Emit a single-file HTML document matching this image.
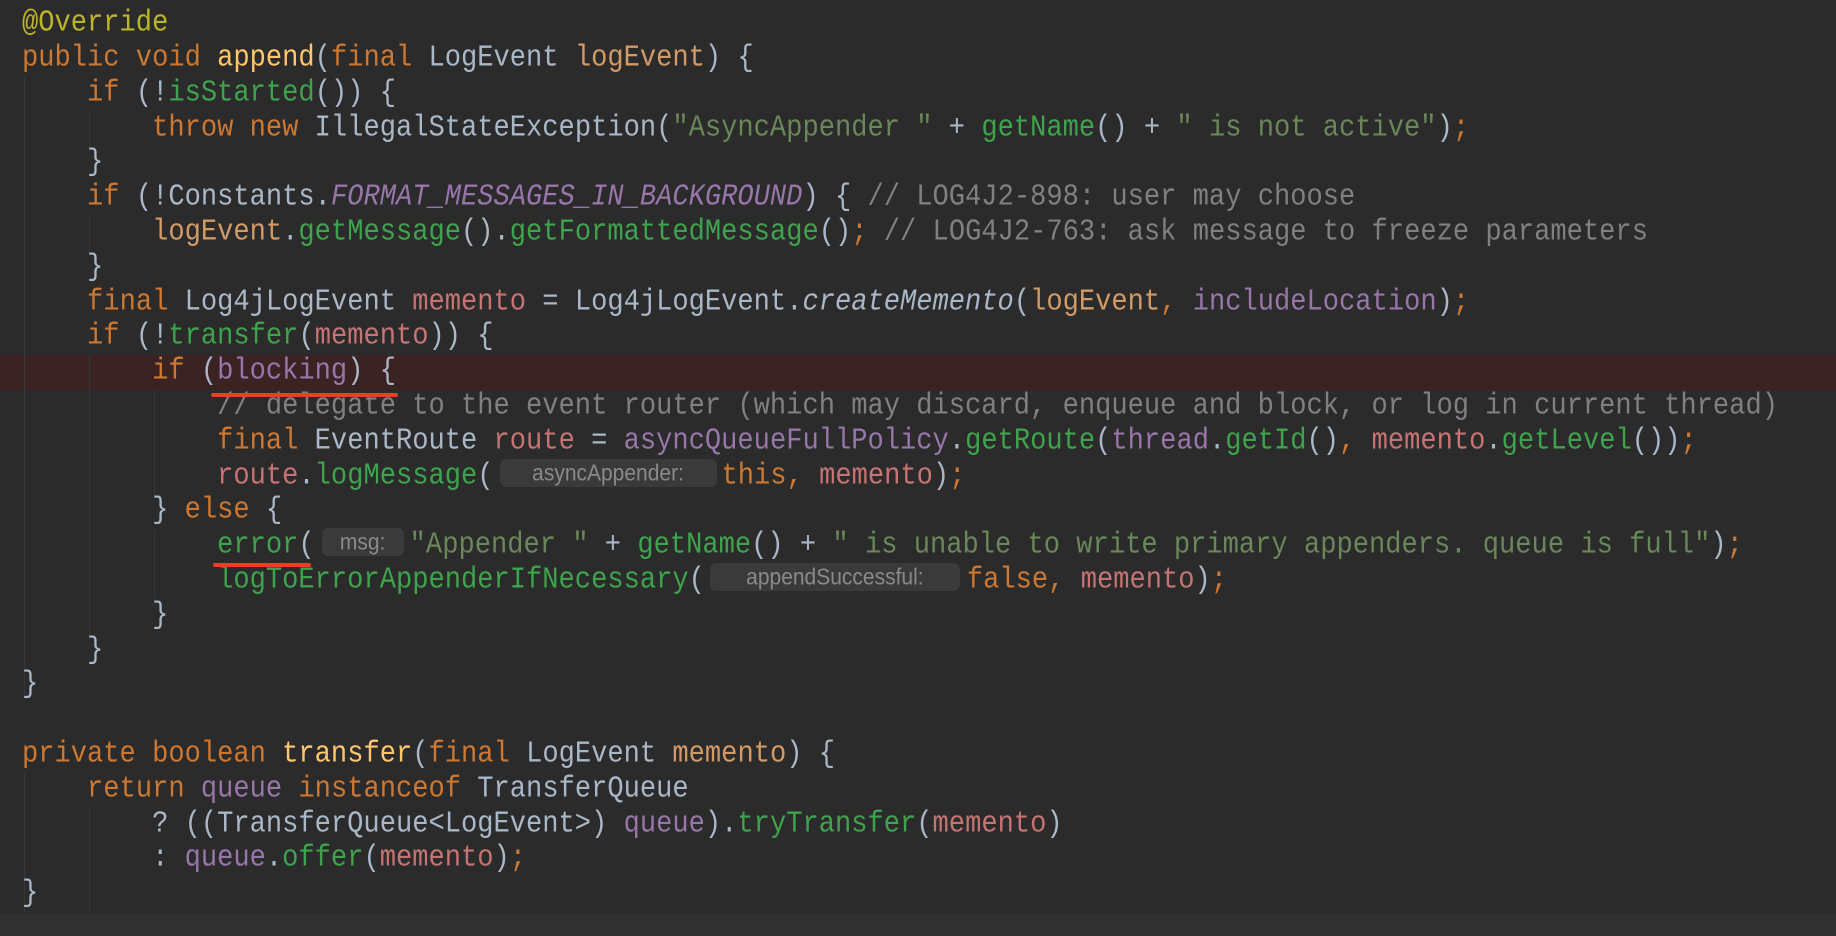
<!DOCTYPE html>
<html><head><meta charset="utf-8"><style>
html,body{margin:0;padding:0;}
body{width:1836px;height:936px;background:#2b2b2b;position:relative;overflow:hidden;font-family:"Liberation Mono",monospace;font-size:27.1px;color:#a9b7c6;}
.l{position:absolute;left:22px;height:34.8px;line-height:34.8px;white-space:pre;transform:scaleY(1.12);transform-origin:left center;}
.k{color:#cc7832}.a{color:#bbb529}.d{color:#ffc66d}.c{color:#3fa34d}.s{color:#6a8759}.cm{color:#808080}
.f{color:#9876aa}.fi{color:#9876aa;font-style:italic}.v{color:#c57373}.p{color:#d19a66}.i{font-style:italic}
.h{display:inline-block;height:25px;line-height:25px;vertical-align:middle;background:#3a3a3a;border-radius:6px;color:#8a8a8a;font-family:"Liberation Sans",sans-serif;font-size:21px;text-align:center;position:relative;top:-2px}
.g{position:absolute;width:1px;background:#373737}
</style></head><body>
<div style="position:absolute;left:0;top:355px;width:1836px;height:35px;background:#3b2324"></div>
<div style="position:absolute;left:0;top:914px;width:1836px;height:22px;background:#313131"></div>
<div class="g" style="left:24px;top:77px;height:620px"></div>
<div class="g" style="left:89px;top:112px;height:35px"></div>
<div class="g" style="left:89px;top:216px;height:35px"></div>
<div class="g" style="left:89px;top:355px;height:280px"></div>
<div class="g" style="left:154px;top:390px;height:105px"></div>
<div class="g" style="left:154px;top:529px;height:70px"></div>
<div class="g" style="left:24px;top:773px;height:140px"></div>
<div class="g" style="left:89px;top:808px;height:105px"></div>

<div class="l" style="top:7.2px"><span class="a">@Override</span></div>
<div class="l" style="top:42px"><span class="k">public void </span><span class="d">append</span>(<span class="k">final </span>LogEvent <span class="p">logEvent</span>) {</div>
<div class="l" style="top:76.8px">    <span class="k">if </span>(!<span class="c">isStarted</span>()) {</div>
<div class="l" style="top:111.6px">        <span class="k">throw new </span>IllegalStateException(<span class="s">"AsyncAppender "</span> + <span class="c">getName</span>() + <span class="s">" is not active"</span>)<span class="k">;</span></div>
<div class="l" style="top:146.4px">    }</div>
<div class="l" style="top:181.2px">    <span class="k">if </span>(!Constants.<span class="fi">FORMAT_MESSAGES_IN_BACKGROUND</span>) { <span class="cm">// LOG4J2-898: user may choose</span></div>
<div class="l" style="top:216px">        <span class="p">logEvent</span>.<span class="c">getMessage</span>().<span class="c">getFormattedMessage</span>()<span class="k">;</span> <span class="cm">// LOG4J2-763: ask message to freeze parameters</span></div>
<div class="l" style="top:250.8px">    }</div>
<div class="l" style="top:285.6px">    <span class="k">final </span>Log4jLogEvent <span class="v">memento</span> = Log4jLogEvent.<span class="i">createMemento</span>(<span class="p">logEvent</span><span class="k">, </span><span class="f">includeLocation</span>)<span class="k">;</span></div>
<div class="l" style="top:320.4px">    <span class="k">if </span>(!<span class="c">transfer</span>(<span class="v">memento</span>)) {</div>
<div class="l" style="top:355.2px">        <span class="k">if </span>(<span class="f">blocking</span>) {</div>
<div class="l" style="top:390px">            <span class="cm">// delegate to the event router (which may discard, enqueue and block, or log in current thread)</span></div>
<div class="l" style="top:424.8px">            <span class="k">final </span>EventRoute <span class="v">route</span> = <span class="f">asyncQueueFullPolicy</span>.<span class="c">getRoute</span>(<span class="f">thread</span>.<span class="c">getId</span>()<span class="k">, </span><span class="v">memento</span>.<span class="c">getLevel</span>())<span class="k">;</span></div>
<div class="l" style="top:459.6px">            <span class="v">route</span>.<span class="c">logMessage</span>(<span class="h" style="margin-left:6px;width:217px;margin-right:5px">asyncAppender:</span><span class="k">this, </span><span class="v">memento</span>)<span class="k">;</span></div>
<div class="l" style="top:494.4px">        } <span class="k">else </span>{</div>
<div class="l" style="top:529.2px">            <span class="c">error</span>(<span class="h" style="margin-left:7px;width:82px;margin-right:6px">msg:</span><span class="s">"Appender "</span> + <span class="c">getName</span>() + <span class="s">" is unable to write primary appenders. queue is full"</span>)<span class="k">;</span></div>
<div class="l" style="top:564px">            <span class="c">logToErrorAppenderIfNecessary</span>(<span class="h" style="margin-left:5px;width:250px;margin-right:7px">appendSuccessful:</span><span class="k">false, </span><span class="v">memento</span>)<span class="k">;</span></div>
<div class="l" style="top:598.8px">        }</div>
<div class="l" style="top:633.6px">    }</div>
<div class="l" style="top:668.4px">}</div>
<div class="l" style="top:738px"><span class="k">private boolean </span><span class="d">transfer</span>(<span class="k">final </span>LogEvent <span class="p">memento</span>) {</div>
<div class="l" style="top:772.8px">    <span class="k">return </span><span class="f">queue </span><span class="k">instanceof </span>TransferQueue</div>
<div class="l" style="top:807.6px">        ? ((TransferQueue&lt;LogEvent&gt;) <span class="f">queue</span>).<span class="c">tryTransfer</span>(<span class="v">memento</span>)</div>
<div class="l" style="top:842.4px">        : <span class="f">queue</span>.<span class="c">offer</span>(<span class="v">memento</span>)<span class="k">;</span></div>
<div class="l" style="top:877.2px">}</div>

<div style="position:absolute;left:211px;top:393px;width:187px;height:4px;background:#f03c25;border-radius:2px"></div>
<div style="position:absolute;left:213px;top:563px;width:98px;height:4px;background:#f03c25;border-radius:2px"></div>
</body></html>
